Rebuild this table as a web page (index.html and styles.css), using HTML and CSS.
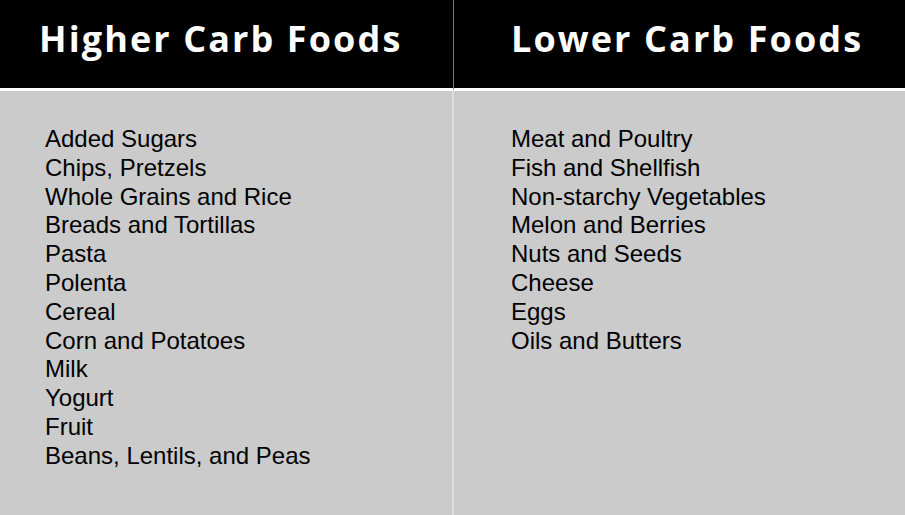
FILE: index.html
```html
<!DOCTYPE html>
<html>
<head>
<meta charset="utf-8">
<link rel="stylesheet" href="styles.css">
</head>
<body>
<div class="table">
  <div class="col left">
    <div class="head"><h2>Higher Carb Foods</h2></div>
    <ul class="list">
      <li>Added Sugars</li>
      <li>Chips, Pretzels</li>
      <li>Whole Grains and Rice</li>
      <li>Breads and Tortillas</li>
      <li>Pasta</li>
      <li>Polenta</li>
      <li>Cereal</li>
      <li>Corn and Potatoes</li>
      <li>Milk</li>
      <li>Yogurt</li>
      <li>Fruit</li>
      <li>Beans, Lentils, and Peas</li>
    </ul>
  </div>
  <div class="col right">
    <div class="head"><h2>Lower Carb Foods</h2></div>
    <ul class="list">
      <li>Meat and Poultry</li>
      <li>Fish and Shellfish</li>
      <li>Non-starchy Vegetables</li>
      <li>Melon and Berries</li>
      <li>Nuts and Seeds</li>
      <li>Cheese</li>
      <li>Eggs</li>
      <li>Oils and Butters</li>
    </ul>
  </div>
</div>
</body>
</html>
```
FILE: styles.css
```css
html, body {
  margin: 0;
  padding: 0;
  background: #cbcbcb;
}
.table {
  display: grid;
  grid-template-columns: 454px 1fr;
  height: 515px;
  width: 905px;
}
.col {
  display: flex;
  flex-direction: column;
}
.left {
  border-right: 2px solid #dcdcdc;
}
.head {
  height: 88px;
  background: #000;
  border-bottom: 3px solid #fff;
  display: flex;
  align-items: center;
}
.left .head {
  margin-right: -2px;
  border-right: 1px solid #777;
}
.head h2 {
  margin: 0;
  color: #fff;
  font-family: "Open Sans", sans-serif;
  font-weight: 700;
  font-size: 36px;
  letter-spacing: 2.1px;
  line-height: 1;
  padding-bottom: 10px;
}
.left .head h2 { padding-left: 39px; }
.right .head h2 { padding-left: 57px; }
.list {
  list-style: none;
  margin: 0;
  padding: 34px 0 0 0;
  font-family: "Liberation Sans", Arial, sans-serif;
  font-size: 24px;
  line-height: 28.8px;
  color: #000;
}
.left .list { padding-left: 45px; }
.right .list { padding-left: 57px; }
```
